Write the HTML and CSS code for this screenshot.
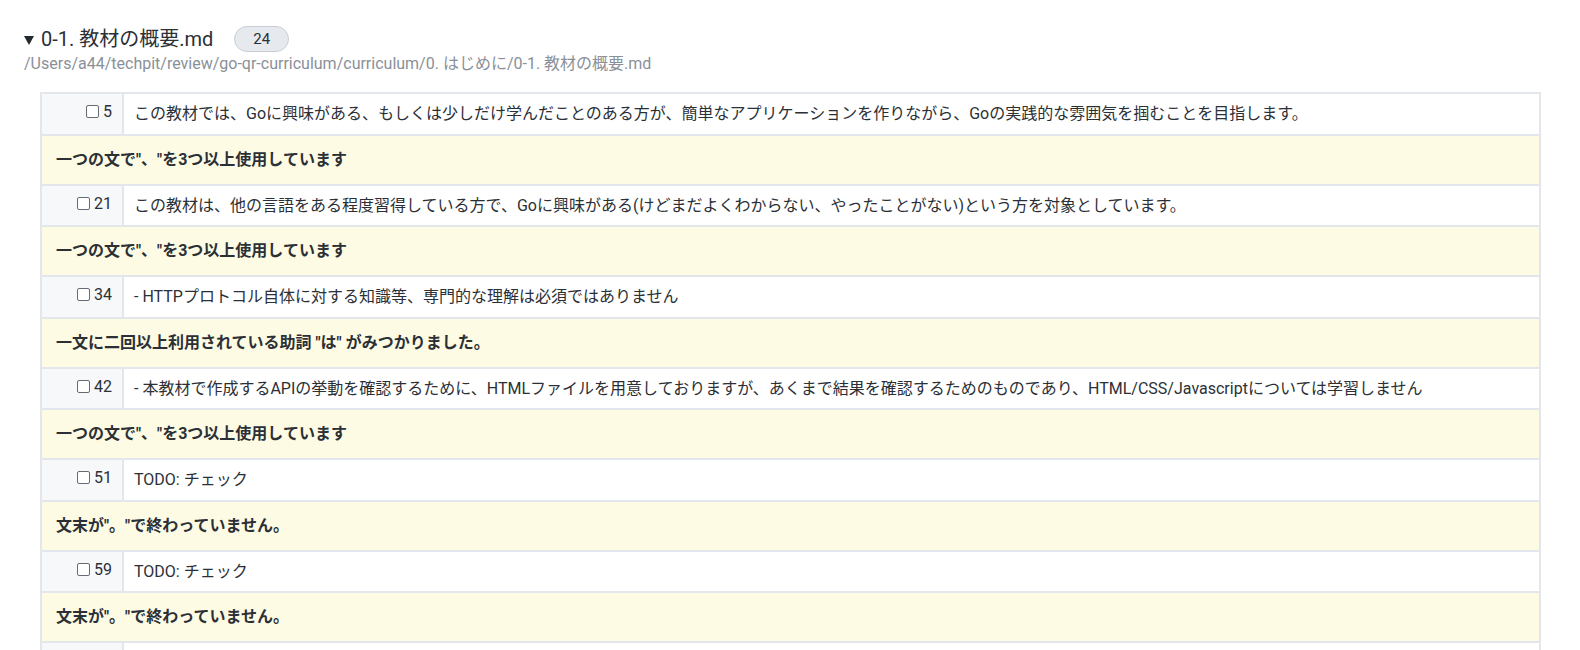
FILE: index.html
```
<!DOCTYPE html>
<html lang="ja">
<head>
    <meta charset="UTF-8">
    <meta name="viewport" content="width=device-width, initial-scale=1.0">
    <title>textlint レポート</title>
    <link rel="stylesheet" href="styles.css">
</head>
<body>

<div class="file">
    <div class="file-head">
        <span class="caret"></span>
        <span class="file-name">0-1. 教材の概要.md</span>
        <span class="count">24</span>
    </div>
    <div class="file-path">/Users/a44/techpit/review/go-qr-curriculum/curriculum/0. はじめに/0-1. 教材の概要.md</div>

    <!-- 指摘一覧 -->
    <table class="lint">
        <tr class="line">
            <td class="num"><span class="check"></span>5</td>
            <td class="src">この教材では、Goに興味がある、もしくは少しだけ学んだことのある方が、簡単なアプリケーションを作りながら、Goの実践的な雰囲気を掴むことを目指します。</td>
        </tr>
        <tr class="msg"><td colspan="2">一つの文で"、"を3つ以上使用しています</td></tr>

        <tr class="line">
            <td class="num"><span class="check"></span>21</td>
            <td class="src">この教材は、他の言語をある程度習得している方で、Goに興味がある(けどまだよくわからない、やったことがない)という方を対象としています。</td>
        </tr>
        <tr class="msg"><td colspan="2">一つの文で"、"を3つ以上使用しています</td></tr>

        <tr class="line">
            <td class="num"><span class="check"></span>34</td>
            <td class="src">- HTTPプロトコル自体に対する知識等、専門的な理解は必須ではありません</td>
        </tr>
        <tr class="msg"><td colspan="2">一文に二回以上利用されている助詞 "は" がみつかりました。</td></tr>

        <tr class="line">
            <td class="num"><span class="check"></span>42</td>
            <td class="src">- 本教材で作成するAPIの挙動を確認するために、HTMLファイルを用意しておりますが、あくまで結果を確認するためのものであり、HTML/CSS/Javascriptについては学習しません</td>
        </tr>
        <tr class="msg"><td colspan="2">一つの文で"、"を3つ以上使用しています</td></tr>

        <tr class="line">
            <td class="num"><span class="check"></span>51</td>
            <td class="src">TODO: チェック</td>
        </tr>
        <tr class="msg"><td colspan="2">文末が"。"で終わっていません。</td></tr>

        <tr class="line">
            <td class="num"><span class="check"></span>59</td>
            <td class="src">TODO: チェック</td>
        </tr>
        <tr class="msg"><td colspan="2">文末が"。"で終わっていません。</td></tr>

        <tr class="line">
            <td class="num"><span class="check"></span>66</td>
            <td class="src">TODO: チェック</td>
        </tr>
        <tr class="msg"><td colspan="2">文末が"。"で終わっていません。</td></tr>
    </table>
</div>

</body>
</html>
```

FILE: styles.css
```
html, body {
    margin: 0;
    padding: 0;
    overflow: hidden;
}

body {
    font-family: Roboto, "Noto Sans CJK JP", sans-serif;
    font-size: 16px;
    color: #2b3036;
    background-color: #fff;
}

.file {
    padding: 26px 39px 0 24px;
}

/* ファイル名の行 */
.file-head {
    display: flex;
    align-items: center;
    height: 26px;
}

.caret {
    width: 0;
    height: 0;
    border-left: 5px solid transparent;
    border-right: 5px solid transparent;
    border-top: 9px solid #24292e;
    margin: 2px 7px 0 0;
}

.file-name {
    font-size: 20px;
    line-height: 26px;
}

.count {
    margin-left: 21px;
    height: 24px;
    line-height: 24px;
    padding: 0 18px;
    border: 1px solid #c9ced6;
    border-radius: 13px;
    background-color: #e6e9ee;
    font-size: 15px;
}

.file-path {
    margin-top: 2px;
    line-height: 20px;
    font-size: 16px;
    color: #8a9099;
}

/* 指摘テーブル */
.lint {
    margin: 18px 0 0 16px;
    width: calc(100% - 16px);
    border-collapse: collapse;
}

.lint td {
    border: 2px solid #e3e6eb;
    line-height: 24px;
}

.line .num {
    width: 60px;
    padding: 6px 10px 9.5px;
    text-align: right;
    white-space: nowrap;
    background-color: #f6f8fa;
}

.check {
    display: inline-block;
    width: 11px;
    height: 11px;
    margin-right: 4px;
    border: 1px solid #666c74;
    border-radius: 2px;
    background-color: #fff;
    vertical-align: -1px;
}

.line .src {
    padding: 8px 10px 7.5px;
    background-color: #fff;
}

.msg td {
    padding: 12px 14px;
    font-weight: bold;
    background-color: #fefbe4;
}
```
